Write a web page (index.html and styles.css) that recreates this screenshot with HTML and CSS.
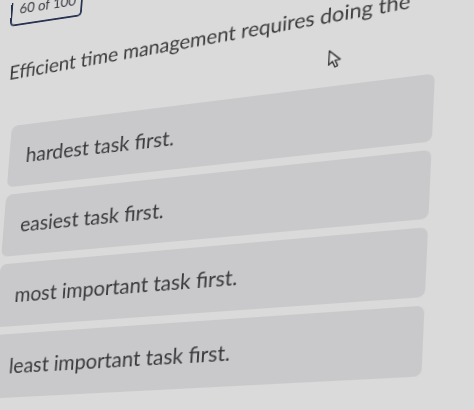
FILE: index.html
```html
<!DOCTYPE html>
<html lang="en">
<head>
<meta charset="utf-8">
<title>Question</title>
<link rel="stylesheet" href="styles.css">
</head>
<body>
<div class="stage">
  <div class="counter">60 of 100</div>
  <p class="question">Efficient time management requires doing the</p>
  <svg class="cursor" width="16" height="21" viewBox="0 0 14 18" aria-hidden="true">
    <path d="M1.5 1.5 L1.5 14 L4.6 11.2 L7 16.4 L9.2 15.4 L6.9 10.4 L11.2 10.2 Z" fill="#e4e4e4" stroke="#3c3c3c" stroke-width="1.2" stroke-linejoin="round"/>
  </svg>
  <div class="options">
    <div class="option">hardest task first.</div>
    <div class="option">easiest task first.</div>
    <div class="option">most important task first.</div>
    <div class="option">least important task first.</div>
  </div>
</div>
</body>
</html>
```

FILE: styles.css
```css
html, body {
  margin: 0;
  padding: 0;
  background: #dadadb;
  overflow: hidden;
  width: 474px;
  height: 410px;
}

.stage {
  position: relative;
  display: flow-root;
  width: 500px;
  height: 440px;
  margin: -30px 0 0 -22px;
  box-sizing: border-box;
  font-family: Lato, "Open Sans", sans-serif;
  color: #3b3b3c;
  transform-origin: 259px 235px;
  transform: perspective(600px) rotateY(-9deg) rotateX(3.5deg) skew(-3deg, -5.5deg);
}

.counter {
  margin: -10px 0 0 -4px;
  width: 82px;
  height: 26px;
  box-sizing: border-box;
  border: 2px solid #283352;
  border-top: none;
  border-radius: 0 0 5px 5px;
  font-size: 15px;
  line-height: 14px;
  padding: 0 0 0 8px;
  color: #3a3a40;
  overflow: hidden;
}

.question {
  margin: 39px 0 0 0;
  font-size: 21px;
  line-height: 24px;
  white-space: nowrap;
  transform-origin: 0 100%;
  transform: skewY(-2.3deg);
}

.cursor {
  position: absolute;
  left: 341px;
  top: 88px;
}

.options {
  display: flex;
  flex-direction: column;
  gap: 8px;
  margin: 47px 0 0 8px;
  width: 437px;
}

.option {
  height: 66px;
  display: flex;
  align-items: center;
  padding-left: 19px;
  background: #c9c9cb;
  border-radius: 7px;
  font-size: 21.5px;
  color: #3a3a3c;
}
```
